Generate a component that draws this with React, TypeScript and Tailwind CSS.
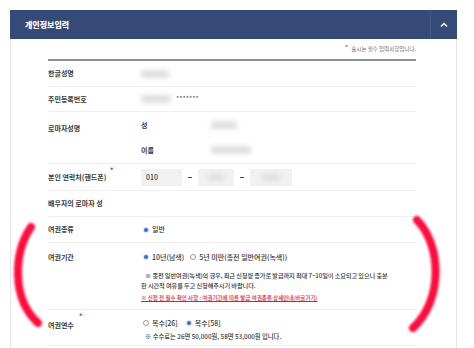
import React from "react";

const font = { fontFamily: '"Noto Sans CJK KR", "Noto Sans", sans-serif' };

function Radio({ checked }: { checked?: boolean }) {
  return checked ? (
    <span className="inline-flex items-center justify-center w-[6px] h-[6px] rounded-full bg-[#d6e2f7]">
      <span className="w-[4px] h-[4px] rounded-full bg-[#2f6fe0]" />
    </span>
  ) : (
    <span className="inline-block w-[6px] h-[6px] rounded-full border border-[#9a9a9a] bg-white" />
  );
}

function Blur({ w, h = 8 }: { w: number; h?: number }) {
  return (
    <div
      className="rounded-[2px] bg-[#dedede] blur-[2.5px]"
      style={{ width: w, height: h }}
    />
  );
}

function Label({ children }: { children: React.ReactNode }) {
  return (
    <div className="w-[93px] shrink-0 relative text-[7px] font-bold text-[#3a3a3a]">
      {children}
    </div>
  );
}

export default function App() {
  return (
    <div style={font} className="relative w-[474px] h-[348px] bg-white overflow-hidden pt-[10px] px-[10px]">
      <div className="w-[447px] h-[340px] border-x border-[#e6e6e6]">
        {/* header */}
        <div className="flex h-[29px] bg-[#354a77] -mx-px">
          <div className="flex-1 flex items-center pl-[15px] text-[8px] font-black text-white">개인정보입력</div>
          <div className="w-[27px] flex items-center justify-center border-l border-[#45598a]">
            <svg width="8" height="6" viewBox="0 0 8 6">
              <path d="M1 4.5 L4 1.5 L7 4.5" fill="none" stroke="#fff" strokeWidth="1.3" />
            </svg>
          </div>
        </div>
        <div className="pl-[37px] pr-[40px]">
          <div className="h-[20px] flex items-center justify-end text-[5.5px] text-[#666]">
            <span className="text-[#e0183c] text-[7px] leading-none mr-[3px] -mt-[3px]">*</span>
            표시는 필수 입력사항입니다.
          </div>
          <div className="border-t-2 border-[#8c909b]">
            {/* 한글성명 */}
            <div className="flex items-center h-[26px] border-b border-[#efefef]">
              <Label>한글성명</Label>
              <Blur w={28} />
            </div>
            {/* 주민등록번호 */}
            <div className="flex items-center h-[25px] border-b border-[#efefef]">
              <Label>주민등록번호</Label>
              <Blur w={30} />
              <span className="ml-[5px] text-[7px] text-[#555] leading-none -mt-[2px]">*******</span>
            </div>
            {/* 로마자성명 */}
            <div className="flex h-[52px] border-b border-[#efefef]">
              <div className="w-[93px] shrink-0 pt-[11px] text-[7px] font-bold text-[#3a3a3a]">로마자성명</div>
              <div className="flex-1 flex flex-col">
                <div className="flex items-center h-[26px]">
                  <div className="w-[70px] text-[7px] font-bold text-[#3a3a3a]">성</div>
                  <Blur w={26} />
                </div>
                <div className="flex items-center h-[26px]">
                  <div className="w-[70px] text-[7px] font-bold text-[#3a3a3a]">이름</div>
                  <Blur w={40} />
                </div>
              </div>
            </div>
            {/* 연락처 */}
            <div className="flex items-center h-[27px] border-b border-[#efefef]">
              <div className="w-[93px] shrink-0 relative text-[7px] font-bold text-[#3a3a3a]">
                본인 연락처(핸드폰)
                <span className="absolute left-[62px] -top-[5px] text-[#e0183c] text-[7px] leading-none">*</span>
              </div>
              <div className="flex items-center gap-[6px]">
                <div className="w-[41px] h-[17px] bg-[#f1f1f1] flex items-center pl-[5px] text-[7px] font-medium text-[#444]">010</div>
                <span className="w-[4px] h-px bg-[#444]" />
                <div className="w-[36px] h-[17px] bg-[#f1f1f1] flex items-center justify-center"><Blur w={16} h={7} /></div>
                <span className="w-[4px] h-px bg-[#444]" />
                <div className="w-[42px] h-[17px] bg-[#f1f1f1] flex items-center justify-center"><Blur w={18} h={7} /></div>
              </div>
            </div>
            {/* 배우자 */}
            <div className="flex items-center h-[26px] border-b border-[#efefef]">
              <Label>배우자의 로마자 성</Label>
            </div>
            {/* 여권종류 */}
            <div className="flex items-center h-[26px] border-b border-[#efefef]">
              <Label>여권종류</Label>
              <div className="flex items-center gap-[3px] pl-[2px] text-[7px] font-medium text-[#333]">
                <Radio checked />일반
              </div>
            </div>
            {/* 여권기간 */}
            <div className="flex h-[67px] border-b border-[#efefef]">
              <div className="w-[93px] shrink-0 pt-[9px] text-[7px] font-bold text-[#3a3a3a]">여권기간</div>
              <div className="flex-1 pt-[9px]">
                <div className="flex items-center pl-[2px] text-[7px] font-medium text-[#333] leading-[10px]">
                  <Radio checked /><span className="ml-[3px] mr-[6px]">10년(남색)</span>
                  <Radio /><span className="ml-[3px]">5년 미만(종전 일반여권(녹색))</span>
                </div>
                <div className="mt-[9px] text-[6.2px] font-medium text-[#333] leading-[10px] tracking-[-0.1px]">
                  <div className="pl-[4px]">※ 종전 일반여권(녹색)의 경우, 최근 신청량 증가로 발급까지 최대 7~10일이 소요되고 있으니 충분</div>
                  <div>한 시간적 여유를 두고 신청해주시기 바랍니다.</div>
                </div>
                <div className="mt-[3px] text-[5.5px] font-medium text-[#e0183c] underline leading-[9px]">
                  ※ 신청 전 필수 확인 사항 : 여권기간에 따른 발급 여권종류 상세안내(바로가기)
                </div>
              </div>
            </div>
            {/* 여권연수 */}
            <div className="flex h-[36px] border-b border-[#efefef]">
              <div className="w-[93px] shrink-0 relative pt-[10px] text-[7px] font-bold text-[#3a3a3a]">
                여권연수
                <span className="absolute left-[31px] top-[3px] text-[#e0183c] text-[7px] leading-none">*</span>
              </div>
              <div className="flex-1 pt-[8px]">
                <div className="flex items-center pl-[2px] text-[7px] font-medium text-[#333] leading-[10px]">
                  <Radio /><span className="ml-[3px] mr-[8px]">복수[26]</span>
                  <Radio checked /><span className="ml-[3px]">복수[58]</span>
                </div>
                <div className="mt-[4px] pl-[4px] text-[6.3px] font-medium text-[#333] leading-[9px]">
                  ※ 수수료는 26면 50,000원, 58면 53,000원 입니다.
                </div>
              </div>
            </div>
          </div>
        </div>
      </div>
      {/* red annotation strokes */}
      <svg className="absolute inset-0 pointer-events-none" width="474" height="348" viewBox="0 0 474 348">
        <defs>
          <filter id="soft" x="-20%" y="-20%" width="140%" height="140%">
            <feGaussianBlur stdDeviation="0.9" />
          </filter>
        </defs>
        <g filter="url(#soft)" fill="none" stroke="#ff0a3c" strokeLinecap="round" strokeWidth="8">
          <path d="M31 227 C 14 252, 11 298, 38 323" />
          <path d="M417 220 C 442 246, 443 300, 413 328" />
        </g>
      </svg>
    </div>
  );
}
